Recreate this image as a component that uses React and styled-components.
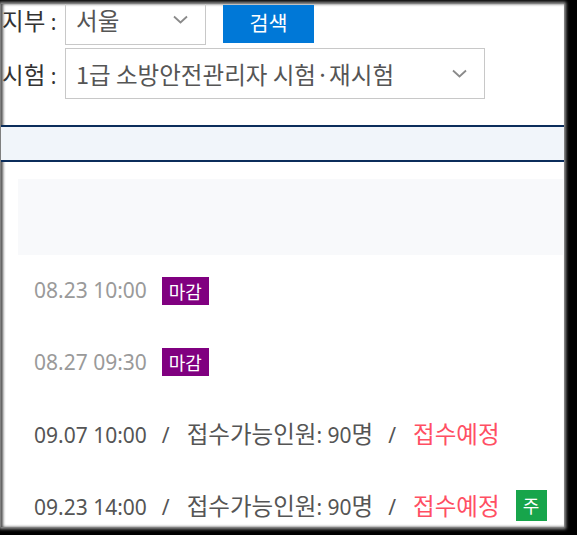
import React from "react";
import styled, { createGlobalStyle } from "styled-components";

const GlobalStyle = createGlobalStyle`
  html, body {
    margin: 0;
    padding: 0;
    background: #000;
  }
  body {
    font-family: "Noto Sans", "Noto Sans CJK KR", sans-serif;
  }
`;

const Page = styled.div`
  width: 577px;
  height: 535px;
  padding: 4px 13px 8px 1px;
  box-sizing: border-box;
  background: #000;
`;

const Panel = styled.div`
  height: 100%;
  background: #fff;
  overflow: hidden;
  box-shadow: 0 0 3px 2px #9a9a9a, inset 2px 0 3px rgba(0, 0, 0, 0.7);
`;

// hangul in the original renders about 12% wider than Noto Sans CJK
const Ko = styled.span`
  font-family: "Noto Sans CJK KR", sans-serif;
  font-size: 1.12em;
`;

const Form = styled.div`
  display: flex;
  flex-direction: column;
  gap: 3px;
  margin: -10px 0 0 0;
`;

const FormRow = styled.div`
  display: flex;
  align-items: center;
  height: 51px;
`;

const Label = styled.span`
  width: 63px;
  padding-left: 1px;
  font-size: 21px;
  color: #333;
  white-space: nowrap;
`;

const Select = styled.div`
  display: flex;
  align-items: center;
  justify-content: space-between;
  box-sizing: border-box;
  width: ${(p) => p.$w}px;
  height: 51px;
  padding: 0 17px 0 10px;
  border: 1px solid #c8c8c8;
  font-size: 21px;
  color: #555;
  white-space: nowrap;
`;

const Button = styled.button`
  margin: 8px 0 0 17px;
  width: 91px;
  height: 38px;
  padding: 0 0 4px;
  border: none;
  background: #0078d7;
  color: #fff;
  font-family: inherit;
  font-size: 18.5px;
`;

const Band = styled.div`
  margin-top: 26px;
  height: 33px;
  border-top: 2px solid #0b2d5b;
  border-bottom: 2px solid #0b2d5b;
  background: #f1f5fa;
`;

const Notice = styled.div`
  margin: 17px 0 0 17px;
  height: 76px;
  background: #f8f9fb;
`;

const List = styled.ul`
  list-style: none;
  margin: 0;
  padding: 0 0 0 33px;
`;

const Item = styled.li`
  display: flex;
  align-items: center;
  height: 71.5px;
  font-size: 21px;
  color: ${(p) => (p.$closed ? "#9a9a9a" : "#555")};
  white-space: nowrap;
`;

const Line = styled.span`
  line-height: 1.3;
`;

const Sep = styled.span`
  margin: 0 17px 0 15px;
`;

const Status = styled.span`
  color: #ff4f63;
`;

const Tag = styled.span`
  display: inline-flex;
  align-items: center;
  justify-content: center;
  margin-left: ${(p) => p.$gap}px;
  min-width: ${(p) => p.$w}px;
  height: ${(p) => p.$h}px;
  padding: 0 4px;
  box-sizing: border-box;
  background: ${(p) => p.$bg};
  color: #fff;
  font-family: "Noto Sans CJK KR", sans-serif;
  font-size: 18px;
`;

const Chevron = () => (
  <svg width="15" height="9" viewBox="0 0 15 9" fill="none">
    <path d="M1 1.5 7.5 7.5 14 1.5" stroke="#8a8a8a" strokeWidth="1.8" />
  </svg>
);

const rows = [
  { time: "08.23 10:00", closed: true },
  { time: "08.27 09:30", closed: true },
  { time: "09.07 10:00", seats: 90 },
  { time: "09.23 14:00", seats: 90, week: true },
];

export default function App() {
  return (
    <Page>
      <GlobalStyle />
      <Panel>
        <Form>
          <FormRow>
            <Label>
              <Ko>지부</Ko> :
            </Label>
            <Select $w={141}>
              <Ko>서울</Ko>
              <Chevron />
            </Select>
            <Button>
              <Ko>검색</Ko>
            </Button>
          </FormRow>
          <FormRow>
            <Label>
              <Ko>시험</Ko> :
            </Label>
            <Select $w={420}>
              <Ko>1급 소방안전관리자 시험·재시험</Ko>
              <Chevron />
            </Select>
          </FormRow>
        </Form>
        <Band />
        <Notice />
        <List>
          {rows.map((r) => (
            <Item key={r.time} $closed={r.closed}>
              {r.closed ? (
                <>
                  <Line>{r.time}</Line>
                  <Tag $bg="#800080" $gap={15} $w={47} $h={28}>
                    마감
                  </Tag>
                </>
              ) : (
                <>
                  <Line>
                    {r.time}
                    <Sep>/</Sep>
                    <Ko>접수가능인원</Ko>: {r.seats}
                    <Ko>명</Ko>
                    <Sep>/</Sep>
                    <Status>
                      <Ko>접수예정</Ko>
                    </Status>
                  </Line>
                  {r.week && (
                    <Tag $bg="#17a54b" $gap={16} $w={31} $h={31}>
                      주
                    </Tag>
                  )}
                </>
              )}
            </Item>
          ))}
        </List>
      </Panel>
    </Page>
  );
}
